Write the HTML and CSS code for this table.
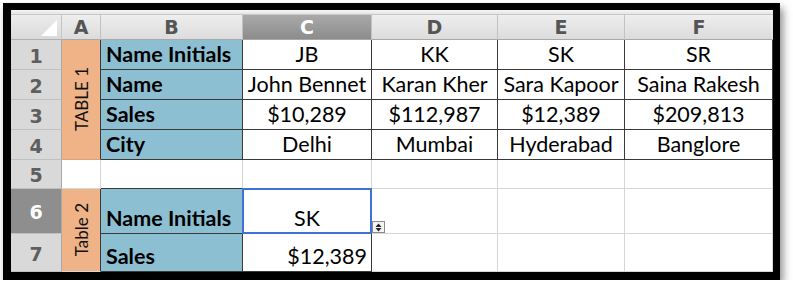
FILE: index.html
```html
<!DOCTYPE html>
<html>
<head>
<meta charset="utf-8">
<link rel="stylesheet" href="styles.css">
</head>
<body>
<div class="frame">
  <div class="strip"></div>
  <div class="sheet">
    <div class="corner"><span class="tri"></span></div>
    <div class="ch">A</div>
    <div class="ch">B</div>
    <div class="ch sel">C</div>
    <div class="ch">D</div>
    <div class="ch">E</div>
    <div class="ch last">F</div>

    <div class="rh">1</div>
    <div class="tag t1"><span class="vt">TABLE 1</span></div>
    <div class="cell lbl">Name Initials</div>
    <div class="cell d">JB</div>
    <div class="cell d">KK</div>
    <div class="cell d">SK</div>
    <div class="cell d">SR</div>

    <div class="rh">2</div>
    <div class="cell lbl">Name</div>
    <div class="cell d">John Bennet</div>
    <div class="cell d">Karan Kher</div>
    <div class="cell d">Sara Kapoor</div>
    <div class="cell d">Saina Rakesh</div>

    <div class="rh">3</div>
    <div class="cell lbl">Sales</div>
    <div class="cell d">$10,289</div>
    <div class="cell d">$112,987</div>
    <div class="cell d">$12,389</div>
    <div class="cell d">$209,813</div>

    <div class="rh">4</div>
    <div class="cell lbl">City</div>
    <div class="cell d">Delhi</div>
    <div class="cell d">Mumbai</div>
    <div class="cell d">Hyderabad</div>
    <div class="cell d">Banglore</div>

    <div class="rh">5</div>
    <div class="cell e"></div>
    <div class="cell e above-t2"></div>
    <div class="cell e"></div>
    <div class="cell e"></div>
    <div class="cell e"></div>
    <div class="cell e"></div>

    <div class="rh sel">6</div>
    <div class="tag t2"><span class="vt">Table 2</span></div>
    <div class="cell lbl">Name Initials</div>
    <div class="cell d active">SK<span class="fillopt"><svg width="9" height="9" viewBox="0 0 9 9"><path d="M4.5 0.5 L7.5 4 H1.5 Z M4.5 8.5 L7.5 5 H1.5 Z" fill="#222"/></svg></span></div>
    <div class="cell e"></div>
    <div class="cell e"></div>
    <div class="cell e"></div>

    <div class="rh">7</div>
    <div class="cell lbl">Sales</div>
    <div class="cell d num">$12,389</div>
    <div class="cell e"></div>
    <div class="cell e"></div>
    <div class="cell e"></div>
  </div>
</div>
</body>
</html>
```

FILE: styles.css
```css
html, body {
  margin: 0;
  padding: 0;
  background: #ffffff;
}

.frame {
  margin: 3px 0 0 3px;
  width: 762px;
  border-style: solid;
  border-color: #000;
  border-width: 7px 7px 8px 8px;
  box-shadow: 3px 5px 8px rgba(0, 0, 0, 0.45);
  background: #fff;
}

.strip {
  height: 5px;
  background: linear-gradient(#f6f6f6, #e4e4e4);
  border-bottom: 1px solid #c8c8c8;
  box-sizing: border-box;
}

.sheet {
  display: grid;
  grid-template-columns: 51px 39px 142px 129px 126px 127px 148px;
  grid-template-rows: 25px 30px 30px 30px 30px 29px 45px 38px;
  font-family: "Lato", "Open Sans", sans-serif;
}

.sheet > div {
  box-sizing: border-box;
  border-right: 1px solid #d6d6d6;
  border-bottom: 1px solid #d6d6d6;
}

.corner {
  position: relative;
  background: linear-gradient(#ececec, #dadada);
  border-right-color: #c4c4c4 !important;
  border-bottom-color: #b0b0b0 !important;
}

.tri {
  position: absolute;
  right: 4px;
  bottom: 3px;
  width: 0;
  height: 0;
  border-left: 16px solid transparent;
  border-bottom: 16px solid #ffffff;
}

.ch {
  display: flex;
  align-items: center;
  justify-content: center;
  background: linear-gradient(#eeeeee, #dcdcdc);
  border-right-color: #c2c2c2 !important;
  border-bottom-color: #a8a8a8 !important;
  font-family: "DejaVu Sans", sans-serif;
  font-weight: bold;
  font-size: 19px;
  color: #555555;
}

.ch.sel {
  background: linear-gradient(#a9a9a9, #8c8c8c);
  color: #ffffff;
}

.ch.last {
  border-right: none !important;
}

.rh {
  display: flex;
  align-items: center;
  justify-content: center;
  background: #d9d9d9;
  border-right-color: #a8a8a8 !important;
  border-bottom-color: #c0c0c0 !important;
  font-family: "DejaVu Sans", sans-serif;
  font-weight: bold;
  font-size: 19px;
  color: #5e5e5e;
  padding-top: 2px;
}

.rh.sel {
  background: #8e8e8e;
  color: #ffffff;
}

.tag {
  grid-row: span 4;
  background: #efb387;
  display: flex;
  align-items: center;
  justify-content: center;
  border-right: 1px solid #3a3a3a !important;
  border-bottom-color: #e0a070 !important;
}

.tag.t2 {
  grid-row: span 2;
  border-bottom-color: #d6d6d6 !important;
}

.vt {
  writing-mode: vertical-rl;
  transform: rotate(180deg);
  font-size: 17px;
  color: #111;
}

.cell {
  display: flex;
  align-items: flex-end;
  justify-content: center;
  font-size: 21.5px;
  line-height: 26px;
  padding-bottom: 2px;
  color: #000;
  white-space: nowrap;
}

.lbl {
  background: #8dbfd2;
  justify-content: flex-start;
  padding-left: 5px;
  font-weight: bold;
  border-right: 1px solid #3a3a3a !important;
  border-bottom: 1px solid #3a3a3a !important;
}

.d {
  border-right: 1px solid #3a3a3a !important;
  border-bottom: 1px solid #3a3a3a !important;
}

.num {
  justify-content: flex-end;
  padding-right: 4px;
}

.above-t2 {
  border-bottom: 1px solid #3a3a3a !important;
}

.active {
  position: relative;
  border-bottom-color: #3a3a3a !important;
}

.active::after {
  content: "";
  position: absolute;
  left: -1px;
  top: -1px;
  right: -1px;
  bottom: -1px;
  border: 2px solid #3f72d8;
  pointer-events: none;
}

.fillopt {
  position: absolute;
  right: -14px;
  bottom: 0px;
  width: 13px;
  height: 12px;
  box-sizing: border-box;
  border: 1px solid #8a8a8a;
  background: #f4f4f4;
  display: flex;
  align-items: center;
  justify-content: center;
  z-index: 2;
}

.fillopt svg {
  display: block;
}
```
